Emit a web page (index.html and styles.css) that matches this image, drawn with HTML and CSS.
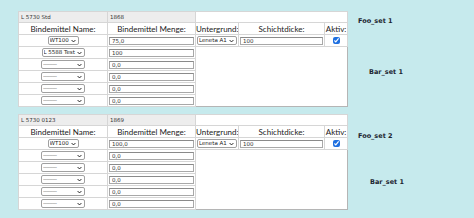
FILE: index.html
```html
<!DOCTYPE html>
<html lang="de">
<head>
    <meta charset="UTF-8">
    <title>Bindemittel Sets</title>
    <link rel="stylesheet" href="styles.css">
</head>
<body>

<div class="set-row">
    <table class="set">
        <colgroup>
            <col class="w-name"><col class="w-menge"><col class="w-grund"><col class="w-dicke"><col class="w-aktiv">
        </colgroup>
        <tr class="meta">
            <td><input type="text" value="L 5730 Std" disabled></td>
            <td><input type="text" value="1868" disabled></td>
            <td colspan="3"></td>
        </tr>
        <tr class="head">
            <th>Bindemittel Name:</th>
            <th>Bindemittel Menge:</th>
            <th>Untergrund:</th>
            <th>Schichtdicke:</th>
            <th>Aktiv:</th>
        </tr>
        <tr>
            <td class="c"><span class="pick"><select><option>WT100</option></select><svg viewBox="0 0 8 6"><path d="M1 1.5 L4 4.5 L7 1.5"/></svg></span></td>
            <td><input type="text" value="75,0"></td>
            <td><span class="pick full"><select><option>Leneta A1</option></select><svg viewBox="0 0 8 6"><path d="M1 1.5 L4 4.5 L7 1.5"/></svg></span></td>
            <td><input type="text" value="100"></td>
            <td class="c"><input type="checkbox" checked></td>
        </tr>
        <tr>
            <td class="c"><span class="pick"><select><option>L 5588 Test</option></select><svg viewBox="0 0 8 6"><path d="M1 1.5 L4 4.5 L7 1.5"/></svg></span></td>
            <td><input type="text" value="100"></td>
            <td colspan="3" rowspan="5" class="blank"></td>
        </tr>
        <tr>
            <td class="c"><span class="pick empty"><select><option>---------</option></select><svg viewBox="0 0 8 6"><path d="M1 1.5 L4 4.5 L7 1.5"/></svg></span></td>
            <td><input type="text" value="0,0"></td>
        </tr>
        <tr>
            <td class="c"><span class="pick empty"><select><option>---------</option></select><svg viewBox="0 0 8 6"><path d="M1 1.5 L4 4.5 L7 1.5"/></svg></span></td>
            <td><input type="text" value="0,0"></td>
        </tr>
        <tr>
            <td class="c"><span class="pick empty"><select><option>---------</option></select><svg viewBox="0 0 8 6"><path d="M1 1.5 L4 4.5 L7 1.5"/></svg></span></td>
            <td><input type="text" value="0,0"></td>
        </tr>
        <tr>
            <td class="c"><span class="pick empty"><select><option>---------</option></select><svg viewBox="0 0 8 6"><path d="M1 1.5 L4 4.5 L7 1.5"/></svg></span></td>
            <td><input type="text" value="0,0"></td>
        </tr>
    </table>
    <div class="labels first">
        <p class="foo">Foo_set 1</p>
        <p class="bar">Bar_set 1</p>
    </div>
</div>

<div class="set-row">
    <table class="set">
        <colgroup>
            <col class="w-name"><col class="w-menge"><col class="w-grund"><col class="w-dicke"><col class="w-aktiv">
        </colgroup>
        <tr class="meta">
            <td><input type="text" value="L 5730 0123" disabled></td>
            <td><input type="text" value="1869" disabled></td>
            <td colspan="3"></td>
        </tr>
        <tr class="head">
            <th>Bindemittel Name:</th>
            <th>Bindemittel Menge:</th>
            <th>Untergrund:</th>
            <th>Schichtdicke:</th>
            <th>Aktiv:</th>
        </tr>
        <tr>
            <td class="c"><span class="pick"><select><option>WT100</option></select><svg viewBox="0 0 8 6"><path d="M1 1.5 L4 4.5 L7 1.5"/></svg></span></td>
            <td><input type="text" value="100,0"></td>
            <td><span class="pick full"><select><option>Leneta A1</option></select><svg viewBox="0 0 8 6"><path d="M1 1.5 L4 4.5 L7 1.5"/></svg></span></td>
            <td><input type="text" value="100"></td>
            <td class="c"><input type="checkbox" checked></td>
        </tr>
        <tr>
            <td class="c"><span class="pick empty"><select><option>---------</option></select><svg viewBox="0 0 8 6"><path d="M1 1.5 L4 4.5 L7 1.5"/></svg></span></td>
            <td><input type="text" value="0,0"></td>
            <td colspan="3" rowspan="5" class="blank"></td>
        </tr>
        <tr>
            <td class="c"><span class="pick empty"><select><option>---------</option></select><svg viewBox="0 0 8 6"><path d="M1 1.5 L4 4.5 L7 1.5"/></svg></span></td>
            <td><input type="text" value="0,0"></td>
        </tr>
        <tr>
            <td class="c"><span class="pick empty"><select><option>---------</option></select><svg viewBox="0 0 8 6"><path d="M1 1.5 L4 4.5 L7 1.5"/></svg></span></td>
            <td><input type="text" value="0,0"></td>
        </tr>
        <tr>
            <td class="c"><span class="pick empty"><select><option>---------</option></select><svg viewBox="0 0 8 6"><path d="M1 1.5 L4 4.5 L7 1.5"/></svg></span></td>
            <td><input type="text" value="0,0"></td>
        </tr>
        <tr>
            <td class="c"><span class="pick empty"><select><option>---------</option></select><svg viewBox="0 0 8 6"><path d="M1 1.5 L4 4.5 L7 1.5"/></svg></span></td>
            <td><input type="text" value="0,0"></td>
        </tr>
    </table>
    <div class="labels second">
        <p class="foo">Foo_set 2</p>
        <p class="bar">Bar_set 1</p>
    </div>
</div>

</body>
</html>
```

FILE: styles.css
```css
html, body {
    margin: 0;
    padding: 0;
    background-color: #c6eaed;
    font-family: "DejaVu Sans", Verdana, sans-serif;
    color: #222;
}
body {
    padding: 11px 0 0 18px;
}
.set-row {
    display: flex;
    align-items: flex-start;
    margin-bottom: 7px;
}
.set {
    border-collapse: collapse;
    background-color: #fff;
    border: 1px solid #b5b5b5;
    table-layout: fixed;
    width: 329px;
}
.w-name { width: 89px; }
.w-menge { width: 88px; }
.w-grund { width: 43px; }
.w-dicke { width: 86px; }
.w-aktiv { width: 23px; }
.set td, .set th {
    border: 1px solid #d6d6d6;
    padding: 0 1px;
    height: 11px;
    font-size: 7px;
    line-height: 7px;
    white-space: nowrap;
    overflow: hidden;
    vertical-align: middle;
}
.set .head th {
    font-family: Lato, "Open Sans", sans-serif;
    font-weight: normal;
    font-size: 8px;
    line-height: 8px;
    height: 11px;
    padding: 0;
    color: #222;
}
.set .meta td {
    height: 9px;
    padding: 0;
}
.set .meta input {
    display: block;
    width: 100%;
    height: 10px;
    border: none;
    background-color: #ededed;
    color: #888;
    font-size: 5.5px;
    padding: 0 2px;
    box-sizing: border-box;
}
.set .c {
    text-align: center;
}
.set .blank {
    border: none;
    border-top: 1px solid #d6d6d6;
}
.set input[type="text"] {
    width: 100%;
    height: 8px;
    box-sizing: border-box;
    border: 1px solid #a8a8a8;
    border-top-color: #8a8a8a;
    padding: 0 2px;
    font-family: "DejaVu Sans", Verdana, sans-serif;
    font-size: 5.5px;
    color: #333;
    display: block;
}
.set .meta input[type="text"] {
    border: none;
    height: 10px;
}
.pick {
    display: inline-flex;
    align-items: center;
    height: 9px;
    box-sizing: border-box;
    border: 1px solid #a0a0a0;
    border-radius: 2px;
    background-color: #fff;
    padding: 0 2px 0 1px;
    vertical-align: middle;
}
.pick select {
    appearance: none;
    -webkit-appearance: none;
    border: none;
    background: transparent;
    padding: 0;
    margin: 0;
    font-family: "DejaVu Sans", Verdana, sans-serif;
    font-size: 5.5px;
    color: #222;
    flex: 1;
    min-width: 0;
    height: 7px;
    line-height: 7px;
}
.pick svg {
    width: 5px;
    height: 4px;
    margin-left: 1px;
    fill: none;
    stroke: #222;
    stroke-width: 1.6;
}
.pick.empty {
    width: 44px;
}
.pick.empty select {
    color: #777;
    letter-spacing: -0.5px;
}
.pick.full {
    width: 100%;
    display: flex;
}
.set input[type="checkbox"] {
    width: 7px;
    height: 7px;
    margin: 0;
    accent-color: #1e6fe0;
    vertical-align: middle;
}
.labels {
    margin-left: 10px;
    font-size: 6.5px;
    font-weight: bold;
    color: #1c2530;
}
.labels p {
    margin: 0;
}
.labels.first .foo { margin-top: 6px; }
.labels.first .bar { margin-top: 43px; margin-left: 11px; }
.labels.second .foo { margin-top: 18px; }
.labels.second .bar { margin-top: 38px; margin-left: 12px; }
```
